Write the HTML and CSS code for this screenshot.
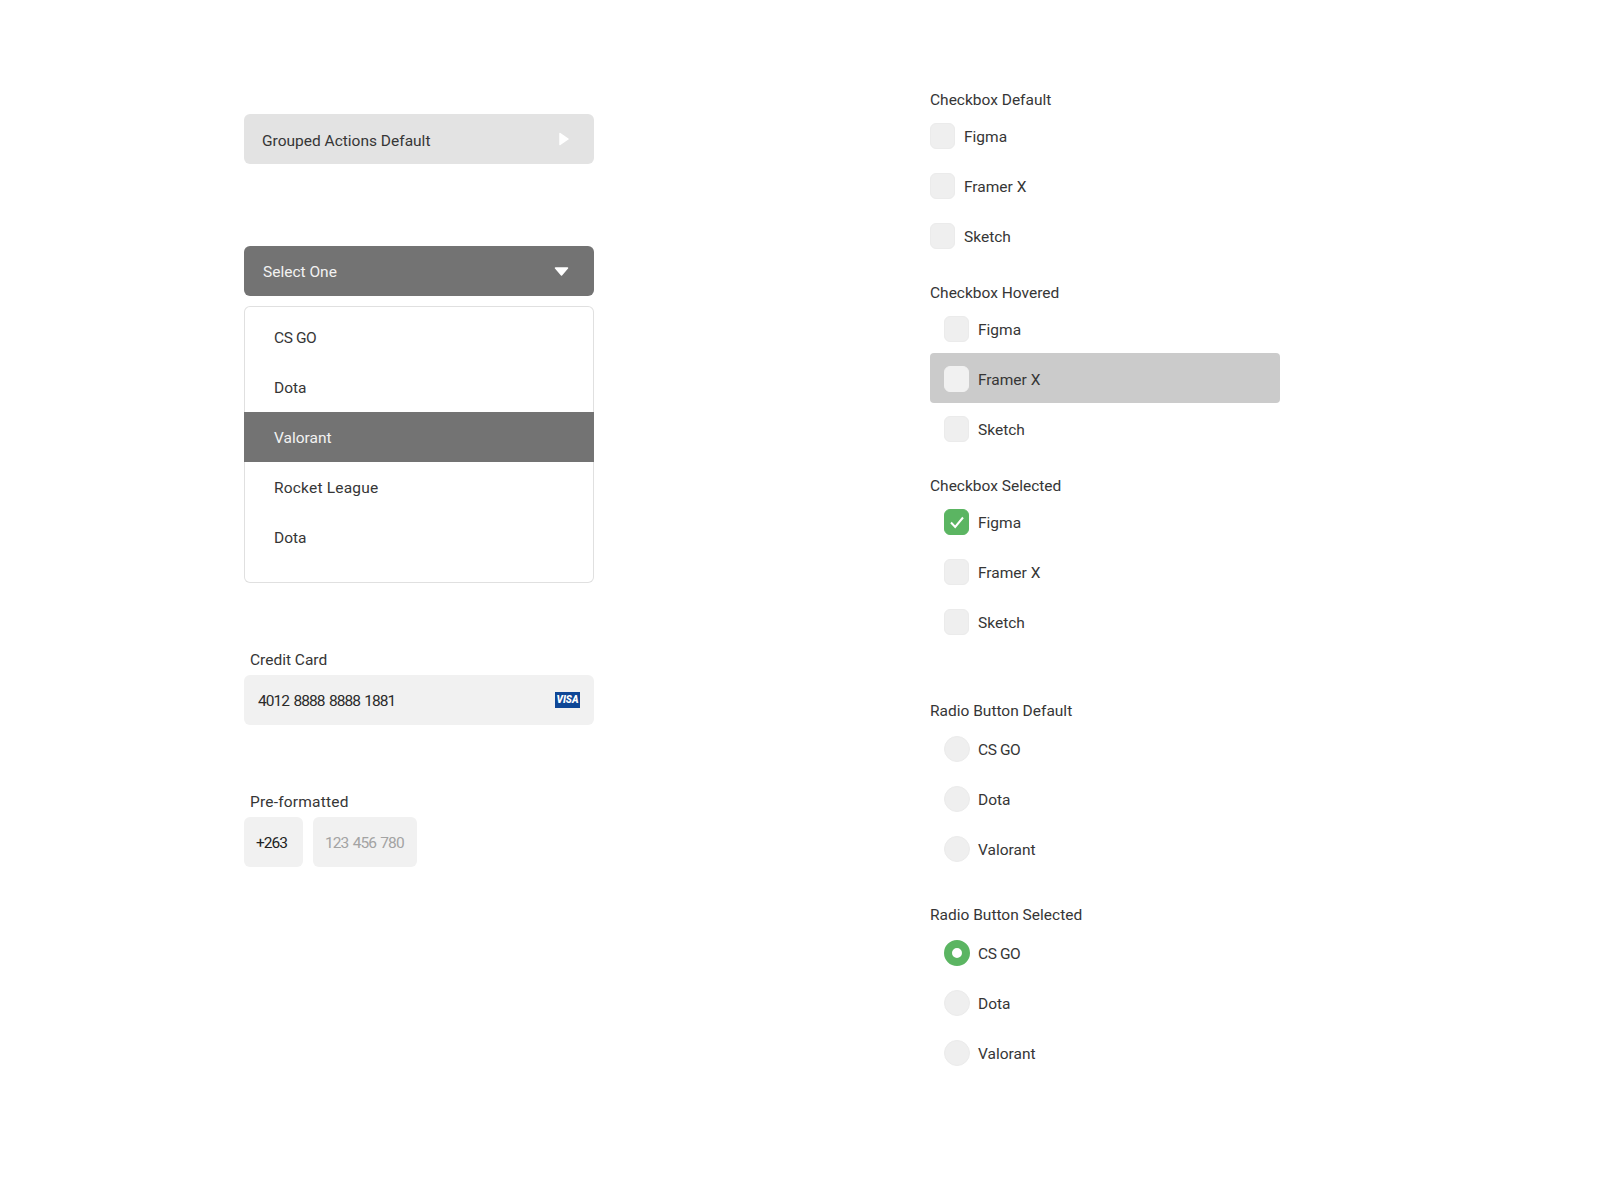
FILE: index.html
```html
<!DOCTYPE html>
<html lang="en">
<head>
<meta charset="utf-8">
<title>Form components</title>
<link rel="stylesheet" href="styles.css">
</head>
<body>
<main class="page">
  <section class="col-left">
    <div class="bar bar-light">
      <span>Grouped Actions Default</span>
      <svg class="caret-right" width="10" height="14" viewBox="0 0 10 14"><path d="M1 1.5 L9 7 L1 12.5 Z" fill="#fff" stroke="#fff" stroke-width="1.5" stroke-linejoin="round"/></svg>
    </div>
    <div class="bar bar-dark">
      <span>Select One</span>
      <svg class="caret-down" width="15" height="9" viewBox="0 0 15 9"><path d="M1.5 1 H13.5 L7.5 8 Z" fill="#fff" stroke="#fff" stroke-width="1.5" stroke-linejoin="round"/></svg>
    </div>
    <ul class="list">
      <li class="list-item tight">CS GO</li>
      <li class="list-item">Dota</li>
      <li class="list-item is-active">Valorant</li>
      <li class="list-item wide">Rocket League</li>
      <li class="list-item">Dota</li>
    </ul>
    <div class="field-label field-label-first">Credit Card</div>
    <div class="input input-card">
      <span class="num">4012 8888 8888 1881</span>
      <span class="visa">VISA</span>
    </div>
    <div class="field-label field-label-second wide">Pre-formatted</div>
    <div class="phone">
      <div class="input phone-code num">+263</div>
      <div class="input phone-number num">123 456 780</div>
    </div>
  </section>

  <section class="col-right">
    <div class="group-label">Checkbox Default</div>
    <div class="row row-flush"><span class="box"></span>Figma</div>
    <div class="row row-flush"><span class="box"></span>Framer X</div>
    <div class="row row-flush"><span class="box"></span>Sketch</div>

    <div class="group-label g2">Checkbox Hovered</div>
    <div class="row"><span class="box"></span>Figma</div>
    <div class="row is-hover"><span class="box"></span>Framer X</div>
    <div class="row"><span class="box"></span>Sketch</div>

    <div class="group-label g3">Checkbox Selected</div>
    <div class="row"><span class="box is-on"><svg width="18" height="18" viewBox="0 0 18 18"><path d="M3 9.5 L7.2 14 L15 4.5" fill="none" stroke="#fff" stroke-width="2"/></svg></span>Figma</div>
    <div class="row"><span class="box"></span>Framer X</div>
    <div class="row"><span class="box"></span>Sketch</div>

    <div class="group-label g4">Radio Button Default</div>
    <div class="row tight"><span class="radio"></span>CS GO</div>
    <div class="row"><span class="radio"></span>Dota</div>
    <div class="row"><span class="radio"></span>Valorant</div>

    <div class="group-label g5">Radio Button Selected</div>
    <div class="row tight"><span class="radio is-on"></span>CS GO</div>
    <div class="row"><span class="radio"></span>Dota</div>
    <div class="row"><span class="radio"></span>Valorant</div>
  </section>
</main>
</body>
</html>
```
FILE: styles.css
```css
* { box-sizing: border-box; }
html, body { margin: 0; padding: 0; background: #fff; }
body {
  font-family: Roboto, "Liberation Sans", sans-serif;
  font-size: 15.5px;
  line-height: 20px;
  color: #363636;
}
.page { display: flex; width: 1600px; height: 1200px; padding-left: 244px; }
.col-left { width: 350px; padding-top: 114px; }
.col-right { width: 350px; margin-left: 336px; padding-top: 90px; }

.tight { letter-spacing: -0.4px; }
.wide { letter-spacing: 0.2px; }
.num { letter-spacing: -0.95px; word-spacing: 1.5px; }

.bar {
  height: 50px;
  border-radius: 6px;
  display: flex;
  align-items: center;
  justify-content: space-between;
}
.bar-light { background: #e3e3e3; padding: 3px 25px 0 18px; }
.bar-dark { background: #737373; color: #f2f2f2; margin-top: 82px; padding: 2px 25px 0 19px; }
.caret-right { margin-top: -3px; }
.caret-down { margin-top: -2px; }

.list {
  list-style: none;
  margin: 10px 0 0;
  padding: 6px 0;
  height: 277px;
  box-shadow: inset 0 0 0 1px #e0e0e0;
  border-radius: 6px;
  overflow: hidden;
}
.list-item { height: 50px; display: flex; align-items: center; padding: 2px 0 0 30px; }
.list-item.is-active { background: #737373; color: #f2f2f2; }

.field-label { padding: 1px 0 0 6px; margin-bottom: 5px; height: 21px; }
.field-label-first { margin-top: 66px; }
.field-label-second { margin-top: 66px; }

.input {
  height: 50px;
  background: #f1f1f1;
  border-radius: 6px;
  display: flex;
  align-items: center;
  padding-top: 2px;
}
.input-card { justify-content: space-between; padding: 0 14px; color: #2b2b2b; }
.input-card .num { padding-top: 2px; }
.visa {
  width: 25px;
  height: 16px;
  background: #0f4796;
  color: #fff;
  font-size: 10px;
  line-height: 16px;
  font-weight: 900;
  font-style: italic;
  text-align: center;
  letter-spacing: 0;
}
.phone { display: flex; gap: 10px; }
.phone-code { width: 59px; padding-left: 12px; color: #222; }
.phone-number { width: 104px; padding-left: 12px; color: #a3a3a3; }

.group-label { height: 20px; }
.g2 { margin-top: 22px; }
.g3 { margin-top: 23px; }
.g4 { margin-top: 55px; }
.g5 { margin-top: 32px; }

.row { height: 50px; display: flex; align-items: center; padding: 4px 0 0 14px; }
.row-flush { padding: 2px 0 0; }
.group-label + .row-flush { margin-top: 1px; }
.g4 + .row, .g5 + .row { margin-top: 2px; }
.row.is-hover { background: #cbcbcb; border-radius: 4px; }

.box, .radio {
  width: 25px;
  height: 26px;
  margin: -2px 9px 0 0;
  background: #efefef;
  border: 1px solid #ebebeb;
  border-radius: 6px;
  display: flex;
  align-items: center;
  justify-content: center;
  flex: none;
}
.is-hover .box { background: #f1f1f1; border-color: #f1f1f1; }
.box.is-on { background: #5bb562; border-color: #5bb562; }
.radio { width: 26px; border-radius: 50%; margin-right: 8px; }
.radio.is-on { background: #fff; border: 8px solid #5bb562; }
```
